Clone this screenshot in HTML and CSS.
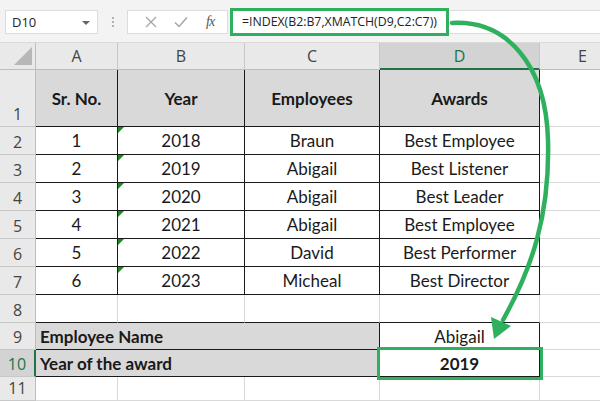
FILE: index.html
```html
<!DOCTYPE html>
<html lang="en">
<head>
  <meta charset="UTF-8" />
  <title>INDEX XMATCH</title>
  <link rel="stylesheet" href="styles.css">
</head>
<body>
  <div class="app">
    <div class="formula-bar">
      <div class="name-box">D10 <span class="caret"></span></div>
      <div class="grip"><span></span><span></span><span></span></div>
      <div class="fx-buttons">
        <svg width="12" height="12" viewBox="0 0 12 12"><path d="M1 1L11 11M11 1L1 11" stroke="#a6a6a6" stroke-width="1.3" fill="none"/></svg>
        <svg width="14" height="12" viewBox="0 0 14 12"><path d="M1 6.5L5 10.5L13 1.5" stroke="#a6a6a6" stroke-width="1.5" fill="none"/></svg>
        <span class="fx">fx</span>
      </div>
      <div class="formula-input">
        <span class="formula">=INDEX(B2:B7,XMATCH(D9,C2:C7))</span>
      </div>
    </div>

    <div class="sheet">
      <!-- column headers -->
      <div class="hd corner"><span class="tri"></span></div>
      <div class="hd col">A</div>
      <div class="hd col">B</div>
      <div class="hd col">C</div>
      <div class="hd col active-col">D</div>
      <div class="hd col">E</div>

      <!-- row 1 -->
      <div class="hd row">1</div>
      <div class="c t th">Sr. No.</div>
      <div class="c t th">Year</div>
      <div class="c t th">Employees</div>
      <div class="c t th">Awards</div>
      <div class="c"></div>

      <div class="hd row">2</div>
      <div class="c t">1</div>
      <div class="c t txt">2018</div>
      <div class="c t">Braun</div>
      <div class="c t">Best Employee</div>
      <div class="c"></div>

      <div class="hd row">3</div>
      <div class="c t">2</div>
      <div class="c t txt">2019</div>
      <div class="c t">Abigail</div>
      <div class="c t">Best Listener</div>
      <div class="c"></div>

      <div class="hd row">4</div>
      <div class="c t">3</div>
      <div class="c t txt">2020</div>
      <div class="c t">Abigail</div>
      <div class="c t">Best Leader</div>
      <div class="c"></div>

      <div class="hd row">5</div>
      <div class="c t">4</div>
      <div class="c t txt">2021</div>
      <div class="c t">Abigail</div>
      <div class="c t">Best Employee</div>
      <div class="c"></div>

      <div class="hd row">6</div>
      <div class="c t">5</div>
      <div class="c t txt">2022</div>
      <div class="c t">David</div>
      <div class="c t">Best Performer</div>
      <div class="c"></div>

      <div class="hd row">7</div>
      <div class="c t">6</div>
      <div class="c t txt">2023</div>
      <div class="c t">Micheal</div>
      <div class="c t">Best Director</div>
      <div class="c"></div>

      <div class="hd row">8</div>
      <div class="c above"></div>
      <div class="c above"></div>
      <div class="c above"></div>
      <div class="c above"></div>
      <div class="c"></div>

      <div class="hd row">9</div>
      <div class="c t label">Employee Name</div>
      <div class="c t">Abigail</div>
      <div class="c"></div>

      <div class="hd row active-row">10</div>
      <div class="c t label">Year of the award</div>
      <div class="c t result">2019</div>
      <div class="c"></div>

      <div class="hd row">11</div>
      <div class="c"></div>
      <div class="c"></div>
      <div class="c"></div>
      <div class="c"></div>
      <div class="c"></div>
    </div>

    <svg class="arrow" width="600" height="401" viewBox="0 0 600 401">
      <path d="M452 23 C507 20 546 65 548 140 C550 215 532 268 503 320" stroke="#2eb05f" stroke-width="4.5" fill="none" stroke-linecap="round"/>
      <polygon points="494,339 491,317 511,326" fill="#2eb05f"/>
    </svg>
  </div>
</body>
</html>
```

FILE: styles.css
```css
:root {
  --green: #2eb05f;
  --xl-green: #217346;
  --grid: #d9d9d9;
  --head-bg: #e9e9e9;
  --head-line: #c8c8c8;
}

body {
  margin: 0;
  background: #fff;
}

.app {
  position: relative;
  width: 600px;
  height: 401px;
  overflow: hidden;
}

/* formula bar */
.formula-bar {
  display: flex;
  align-items: flex-start;
  height: 43px;
  box-sizing: border-box;
  padding-top: 10px;
  background: #f3f3f3;
  border-bottom: 1px solid #dadada;
  font-family: "Open Sans", sans-serif;
}

.name-box {
  margin-left: 5px;
  width: 93px;
  height: 24px;
  box-sizing: border-box;
  background: #fff;
  border: 1px solid #dcdcdc;
  display: flex;
  align-items: center;
  padding-left: 6px;
  font-size: 13px;
  color: #222;
  position: relative;
}

.caret {
  position: absolute;
  right: 7px;
  top: 10px;
  border-left: 4px solid transparent;
  border-right: 4px solid transparent;
  border-top: 4px solid #666;
}

.grip {
  width: 29px;
  height: 24px;
  display: flex;
  flex-direction: column;
  align-items: center;
  justify-content: center;
  gap: 2px;
}

.grip span {
  width: 2px;
  height: 2px;
  background: #b0b0b0;
}

.fx-buttons {
  width: 101px;
  height: 24px;
  box-sizing: border-box;
  background: #fff;
  border: 1px solid #dcdcdc;
  display: flex;
  align-items: center;
  justify-content: space-around;
  padding: 0 4px 0 8px;
}

.fx {
  font-family: "Liberation Serif", serif;
  font-style: italic;
  font-size: 14px;
  color: #555;
  letter-spacing: -1px;
}

.formula-input {
  flex: 1;
  height: 24px;
  margin-left: 2px;
  background: #fff;
  border-top: 1px solid #dcdcdc;
  border-bottom: 1px solid #dcdcdc;
  box-sizing: border-box;
  display: flex;
}

.formula {
  margin: -3px 0;
  height: 28px;
  box-sizing: border-box;
  border: 3px solid var(--green);
  padding: 0 9px;
  line-height: 22px;
  font-size: 12.3px;
  color: #222;
  white-space: nowrap;
  background: #fff;
}

/* sheet grid */
.sheet {
  display: grid;
  width: 626px;
  grid-template-columns: 36px 82px 127px 135px 160px 86px;
  grid-template-rows: 27px 57px repeat(7, 28px) 27px 27px 24px;
  font-family: "Lato", sans-serif;
}

.hd {
  background: var(--head-bg);
  color: #444;
  font-family: "Open Sans", sans-serif;
  font-size: 16px;
  line-height: 20px;
  box-sizing: border-box;
  display: flex;
  justify-content: center;
}

.col {
  align-items: center;
  border-right: 1px solid var(--head-line);
  border-bottom: 1px solid #bdbdbd;
}

.row {
  align-items: flex-end;
  padding-bottom: 2px;
  border-right: 1px solid #bdbdbd;
  border-bottom: 1px solid var(--head-line);
}

.corner {
  border-right: 1px solid #bdbdbd;
  border-bottom: 1px solid #bdbdbd;
  position: relative;
}

.tri {
  position: absolute;
  right: 3px;
  bottom: 4px;
  border-left: 18px solid transparent;
  border-bottom: 18px solid #b7b7b7;
}

.active-col {
  background: #d3d3d3;
  color: var(--xl-green);
  border-bottom: 2px solid var(--xl-green);
}

.active-row {
  background: #d3d3d3;
  color: var(--xl-green);
  border-right: 2px solid var(--xl-green);
}

.c {
  box-sizing: border-box;
  border-right: 1px solid var(--grid);
  border-bottom: 1px solid var(--grid);
  display: flex;
  align-items: center;
  justify-content: center;
  font-size: 17px;
  color: #1a1a1a;
  position: relative;
  white-space: nowrap;
}

.c.t {
  border-right-color: #1a1a1a;
  border-bottom-color: #1a1a1a;
}

.c.above {
  border-bottom-color: #1a1a1a;
}

.th {
  background: #d9d9d9;
  font-weight: bold;
}

.txt::before {
  content: "";
  position: absolute;
  left: 0;
  top: 0;
  border-top: 6px solid #1a8a1a;
  border-right: 6px solid transparent;
}

.label {
  grid-column: span 3;
  justify-content: flex-start;
  padding-left: 4px;
  background: #d9d9d9;
  font-weight: bold;
}

.result {
  font-weight: bold;
  outline: 3px solid var(--green);
  outline-offset: 0;
  z-index: 1;
}

.arrow {
  position: absolute;
  left: 0;
  top: 0;
  pointer-events: none;
}
```
